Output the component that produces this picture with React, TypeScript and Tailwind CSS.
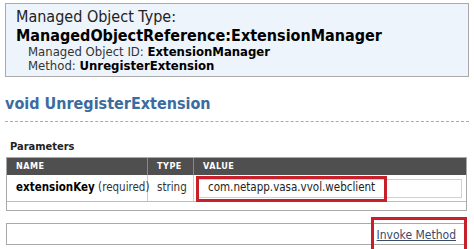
export default function App() {
  const font = { fontFamily: '"DejaVu Sans Condensed", "DejaVu Sans", Verdana, sans-serif' }
  return (
    <div className="relative w-[474px] h-[249px] overflow-hidden bg-white text-[#222]" style={font}>
      {/* Object header */}
      <div className="mx-[5px] mt-[3px] border border-[#a9a9a9] bg-[#eef4fb] pl-[10px] pt-[4px] h-[74px]">
        <div className="text-[16px] leading-[18px] text-[#222]">Managed Object Type:</div>
        <div className="text-[16px] leading-[19px] font-bold text-black">ManagedObjectReference:ExtensionManager</div>
        <div className="pl-[12px] text-[13px] leading-[14px] text-[#333]">
          Managed Object ID: <b className="text-black">ExtensionManager</b>
        </div>
        <div className="pl-[12px] text-[13px] leading-[14px] text-[#333]">
          Method: <b className="text-black">UnregisterExtension</b>
        </div>
      </div>

      {/* Method title */}
      <div className="mx-[5px] mt-[17px] pb-[7px] border-b border-dashed border-[#aaa] text-[16px] leading-[20px] font-bold text-[#3a6c9f]">
        void UnregisterExtension
      </div>

      {/* Parameters */}
      <div className="mx-[10px] mt-[18px] text-[11px] leading-[13px] font-bold text-[#222]">Parameters</div>
      <div className="mx-[6px] mt-[4px] w-[461px] border border-[#a9a9a9]">
        <div className="flex h-[17px] bg-[#4f4f4f] text-[9px] font-bold text-white tracking-[0.5px] items-center">
          <div className="w-[141px] pl-[9px] border-r border-[#888] h-full flex items-center">NAME</div>
          <div className="w-[46px] pl-[9px] border-r border-[#888] h-full flex items-center">TYPE</div>
          <div className="flex-1 pl-[9px]">VALUE</div>
        </div>
        <div className="flex h-[27px] text-[11.5px] border-b border-[#bbb]">
          <div className="w-[141px] pl-[9px] border-r border-[#ccc] flex items-center whitespace-nowrap">
            <b className="text-black">extensionKey</b>&nbsp;<span className="text-[#333]">(required)</span>
          </div>
          <div className="w-[46px] pl-[9px] border-r border-[#ccc] flex items-center text-[#333]">string</div>
          <div className="flex-1 flex items-center pl-[4px] pr-[4px]">
            <div className="relative w-full h-[19px] border border-[#d0d0d0] bg-white flex items-center">
              <div className="absolute left-[-3px] top-[-4px] w-[191px] h-[26px] border-[3px] border-[#c8202b]" />
              <span className="pl-[9px] text-[11.5px] text-[#222]">com.netapp.vasa.vvol.webclient</span>
            </div>
          </div>
        </div>
        <div className="h-[8px]" />
      </div>

      {/* Invoke */}
      <div className="mx-[6px] mt-[12px] w-[461px] h-[22px] border border-[#a9a9a9] flex items-center justify-end pr-[10px]">
        <div className="relative">
          <span className="text-[12px] text-[#3a4a6a] underline">Invoke Method</span>
          <div className="absolute left-[-6px] top-[-5px] right-[-11px] bottom-[-7px] border-[3px] border-[#c8202b]" />
        </div>
      </div>
    </div>
  )
}
